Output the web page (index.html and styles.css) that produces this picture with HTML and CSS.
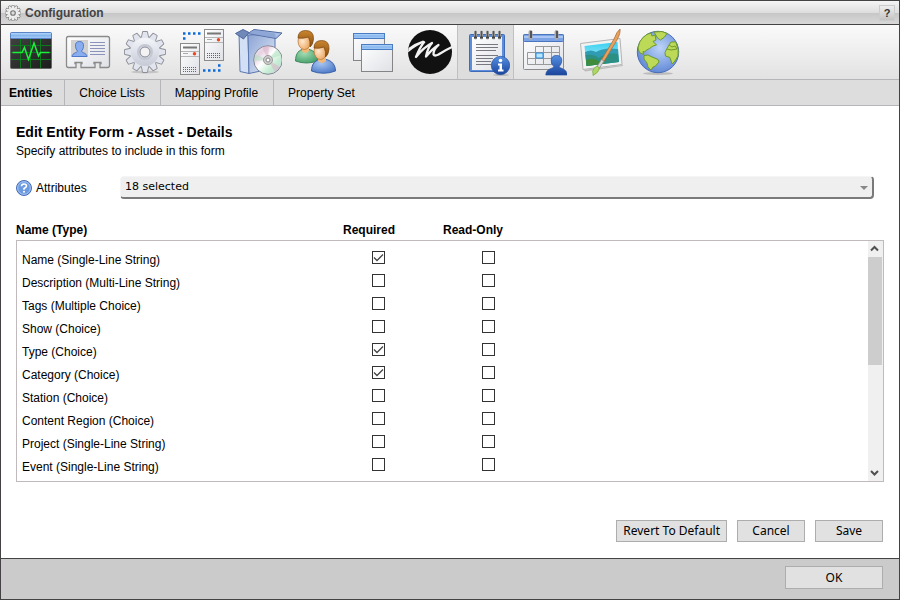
FILE: index.html
```html
<!DOCTYPE html>
<html lang="en">
<head>
    <meta charset="UTF-8">
    <meta name="viewport" content="width=device-width, initial-scale=1.0">
    <title>Configuration</title>
    <link rel="stylesheet" href="styles.css">
</head>
<body>

    <!-- shared gradients and shapes -->
    <svg class="defs" aria-hidden="true">
        <defs>
            <linearGradient id="blue-bar" x1="0" y1="0" x2="0" y2="1">
                <stop offset="0" stop-color="#b9dcfb"/>
                <stop offset=".5" stop-color="#86b5ee"/>
                <stop offset="1" stop-color="#a9cdf6"/>
            </linearGradient>
            <linearGradient id="paper" x1="0" y1="0" x2="1" y2="1">
                <stop offset="0" stop-color="#ffffff"/>
                <stop offset="1" stop-color="#dfe1e6"/>
            </linearGradient>
            <linearGradient id="metal" x1="0" y1="0" x2="0" y2="1">
                <stop offset="0" stop-color="#f4f6fa"/>
                <stop offset="1" stop-color="#c6cad6"/>
            </linearGradient>
            <linearGradient id="screen" x1="0" y1="0" x2="1" y2="1">
                <stop offset="0" stop-color="#444444"/>
                <stop offset="1" stop-color="#1c1c1c"/>
            </linearGradient>
            <linearGradient id="carton" x1="0" y1="0" x2="1" y2="1">
                <stop offset="0" stop-color="#8ba3d3"/>
                <stop offset="1" stop-color="#e4ecfa"/>
            </linearGradient>
            <linearGradient id="disc" x1="0" y1="0" x2="1" y2="1">
                <stop offset="0" stop-color="#f2f2f4"/>
                <stop offset=".25" stop-color="#e6d2e2"/>
                <stop offset=".45" stop-color="#ffffff"/>
                <stop offset=".7" stop-color="#c4ecd2"/>
                <stop offset="1" stop-color="#c9d0e8"/>
            </linearGradient>
            <radialGradient id="skin" cx=".35" cy=".5" r=".7">
                <stop offset="0" stop-color="#ffe9cf"/>
                <stop offset="1" stop-color="#e89a4c"/>
            </radialGradient>
            <linearGradient id="hair" x1="0" y1="0" x2="0" y2="1">
                <stop offset="0" stop-color="#c98530"/>
                <stop offset="1" stop-color="#8a4d0c"/>
            </linearGradient>
            <radialGradient id="green-body" cx=".4" cy=".3" r=".8">
                <stop offset="0" stop-color="#a4dcb4"/>
                <stop offset="1" stop-color="#3d9b66"/>
            </radialGradient>
            <radialGradient id="blue-body" cx=".4" cy=".3" r=".8">
                <stop offset="0" stop-color="#a8c6f2"/>
                <stop offset="1" stop-color="#4573c4"/>
            </radialGradient>
            <linearGradient id="badge" x1="0" y1="0" x2="0" y2="1">
                <stop offset="0" stop-color="#5590e2"/>
                <stop offset="1" stop-color="#1b459c"/>
            </linearGradient>
            <radialGradient id="ocean" cx=".55" cy=".4" r=".65">
                <stop offset="0" stop-color="#bcd4f8"/>
                <stop offset="1" stop-color="#5b84d4"/>
            </radialGradient>
            <linearGradient id="sky" x1="0" y1="0" x2="0" y2="1">
                <stop offset="0" stop-color="#36d0f2"/>
                <stop offset="1" stop-color="#c6f2f6"/>
            </linearGradient>
            <path id="tooth" d="M21.500 11 23 4h4l1.500 7z"/>
            <g id="teeth">
                <use href="#tooth"/>
                <use href="#tooth" transform="rotate(30 25 24)"/>
                <use href="#tooth" transform="rotate(60 25 24)"/>
                <use href="#tooth" transform="rotate(90 25 24)"/>
                <use href="#tooth" transform="rotate(120 25 24)"/>
                <use href="#tooth" transform="rotate(150 25 24)"/>
                <use href="#tooth" transform="rotate(180 25 24)"/>
                <use href="#tooth" transform="rotate(210 25 24)"/>
                <use href="#tooth" transform="rotate(240 25 24)"/>
                <use href="#tooth" transform="rotate(270 25 24)"/>
                <use href="#tooth" transform="rotate(300 25 24)"/>
                <use href="#tooth" transform="rotate(330 25 24)"/>
            </g>
            <g id="server">
                <rect x=".5" y=".5" width="19" height="31" fill="url(#paper)" stroke="#8b8b8b"/>
                <path d="M1 8.500h18M1 13.500h18" stroke="#b5b5b5"/>
                <path d="M3 4.500h14" stroke="#777" stroke-width="2"/>
                <path d="M3 10.500h5" stroke="#aaa"/>
                <circle cx="14.500" cy="10.800" r="1.700" fill="#f0441c"/>
                <path d="M3 24.500h14M3 26.500h14M3 28.500h14" stroke="#666" stroke-dasharray="1 1"/>
            </g>
            <g id="win">
                <rect x=".5" y=".5" width="31" height="27" fill="url(#paper)" stroke="#858585"/>
                <rect x=".5" y=".5" width="31" height="5" fill="url(#blue-bar)" stroke="#4a7cc4"/>
            </g>
        </defs>
    </svg>

    <div class="window">
        <header class="title-bar">
            <svg class="title-icon" viewBox="4 3 42 42" aria-hidden="true">
                <use href="#teeth" fill="#e8e8e8" stroke="#777" stroke-width="3"/>
                <circle cx="25" cy="24" r="15" fill="#eee" stroke="#888" stroke-width="2"/>
                <use href="#teeth" fill="#eee"/>
                <circle cx="25" cy="24" r="6" fill="#ddd" stroke="#777" stroke-width="3"/>
            </svg>
            <h1>Configuration</h1>
            <button type="button" class="help-button">?</button>
        </header>

        <nav class="toolbar">
            <button type="button" class="tool" aria-label="Monitor">
                <svg viewBox="0 0 48 48">
                    <rect x="4.500" y="5" width="41" height="35.500" rx="1" fill="url(#screen)" stroke="#666"/>
                    <path d="M14.500 11v29M24.500 11v29M34.500 11v29M5 17.500h40M5 24.500h40M5 31.500h40" stroke="#0b7a1c"/>
                    <rect x="4.500" y="4.500" width="41" height="6" rx="1" fill="url(#blue-bar)" stroke="#5a83c8"/>
                    <path d="M6.500 24.500H16l2.500-5 4 12L28 15l4.500 13 2-3.500h9" fill="none" stroke="#1cf03c" stroke-width="1.500"/>
                </svg>
            </button>
            <button type="button" class="tool" aria-label="Contacts">
                <svg viewBox="0 0 48 48">
                    <path d="M5.500 8.500h39q2 0 2 2v27q0 2-2 2H37v-4h1v-1h-7v1h1v4H18v-4h1v-1h-7v1h1v4H5.500q-2 0-2-2v-27q0-2 2-2z" fill="url(#paper)" stroke="#8a8a8a" stroke-width="1.300"/>
                    <rect x="8" y="12" width="17" height="17" fill="#d0d0d0"/>
                    <path d="M16.500 13.500c-3 0-4.300 2-4 4.800.2 2.300 1 3.500 2 4.700-.2 2-5 1.500-5.500 5.500h15c-.5-4-5.300-3.500-5.500-5.500 1-1.200 1.800-2.400 2-4.700.3-2.800-1-4.800-4-4.800z" fill="#88aef0" stroke="#5078c8"/>
                    <path d="M27 14.500h15M27 17.500h15M27 20.500h15M27 23.500h15M27 26.500h15" stroke="#8b93ba"/>
                </svg>
            </button>
            <button type="button" class="tool" aria-label="Settings">
                <svg viewBox="0 0 48 48">
                    <ellipse cx="25" cy="44" rx="14" ry="1.500" fill="#c4c4c4"/>
                    <use href="#teeth" fill="#e6e9f1" stroke="#8c8f98" stroke-width="1.800" stroke-linejoin="round"/>
                    <circle cx="25" cy="24" r="15.500" fill="url(#metal)" stroke="#8c8f98"/>
                    <use href="#teeth" fill="#e2e5ee"/>
                    <circle cx="25" cy="24" r="14" fill="url(#metal)"/>
                    <circle cx="25" cy="24" r="7" fill="#d7dae3" stroke="#c4c8d4" stroke-width="2"/>
                    <circle cx="25" cy="24" r="5" fill="#f3f3f3" stroke="#888a92"/>
                </svg>
            </button>
            <button type="button" class="tool" aria-label="Servers">
                <svg viewBox="0 0 48 48">
                    <use href="#server" x="27" y="1"/>
                    <use href="#server" x="3" y="15"/>
                    <path d="M6 5.500h18M6 10.500h3M26 42.500h18M41 37.500h3" stroke="#0a6ad8" stroke-width="2.500" stroke-dasharray="2.500 2.500"/>
                </svg>
            </button>
            <button type="button" class="tool" aria-label="Software">
                <svg viewBox="0 0 48 48">
                    <path d="M5 5.500 14 7l1 38.500-9-2z" fill="#d3dff5" stroke="#5b77b0"/>
                    <path d="m14 7 27-1v34l-26 5.500z" fill="url(#carton)" stroke="#5b77b0"/>
                    <path d="m1.500 5.500 7.500-4 6 3L9.500 11z" fill="#7189b8" stroke="#4d689f"/>
                    <path d="m14 5.500 6-4 28 3.500-6 5.500z" fill="#a9bee6" stroke="#4d689f"/>
                    <path d="m14 5.500 28 5-1-5-21-4z" fill="#7d98cd" opacity=".6"/>
                    <circle cx="34" cy="32" r="14.300" fill="url(#disc)" stroke="#858894"/>
                    <path d="M34 32 28 19l7-1.500zM34 32l12 7-5 5z" fill="#dcaec4" opacity=".5"/>
                    <path d="m34 32-13-6-1 7zM34 32l13-5-4-6z" fill="#aae0bc" opacity=".5"/>
                    <circle cx="34" cy="32" r="4.500" fill="#ccc" stroke="#999"/>
                    <circle cx="34" cy="32" r="2" fill="#fff" stroke="#888"/>
                </svg>
            </button>
            <button type="button" class="tool" aria-label="Users">
                <svg viewBox="0 0 48 48">
                    <path d="M4.500 33c0-7 3-12 10-12s12 4 12 12q-11 4-22 0z" fill="url(#green-body)" stroke="#43895f"/>
                    <path d="M11 18v5q3 4 7 0v-6z" fill="#f0b878"/>
                    <ellipse cx="13.500" cy="13" rx="6.500" ry="8.500" fill="url(#skin)" stroke="#b87333" stroke-width=".7"/>
                    <path d="M7 10q0-7.500 7.500-7.500Q23 2.500 22.500 11q-.5 6-3.500 8 .5-6-1.500-10Q12 11 7 10z" fill="url(#hair)" stroke="#7a450e" stroke-width=".7"/>
                    <path d="M20.500 43c0-7 4-12 11-12s13 4 13 12q-12 4.500-24 0z" fill="url(#blue-body)" stroke="#3b62a8"/>
                    <path d="M27 28v5q4 4 8 0v-6z" fill="#f0b878"/>
                    <ellipse cx="29.500" cy="23" rx="6.500" ry="8.500" fill="url(#skin)" stroke="#b87333" stroke-width=".7"/>
                    <path d="M23 20q0-7.500 7.500-7.500Q38.500 12.500 38 21q-.5 6-3.500 8 .5-6-1.500-10-5 2-10 1z" fill="url(#hair)" stroke="#7a450e" stroke-width=".7"/>
                </svg>
            </button>
            <button type="button" class="tool" aria-label="Windows">
                <svg viewBox="0 0 48 48">
                    <use href="#win" x="5" y="5"/>
                    <use href="#win" x="13" y="16"/>
                </svg>
            </button>
            <button type="button" class="tool" aria-label="Media">
                <svg viewBox="0 0 48 48">
                    <circle cx="25" cy="24" r="22" fill="#111"/>
                    <path d="M3.500 20Q10 15 18 12.500L20.500 14Q11 17.500 3 24.500z" fill="#f2f2f2"/>
                    <path d="M19.500 13.500Q15 19 11 29 19 19 27 15 22.500 20 21 28.500 27 21 33.500 17 28 22 28.500 26.500q1 2 5 0 7-4.500 13.500-7.500" fill="none" stroke="#f2f2f2" stroke-width="2.300" stroke-linejoin="round"/>
                </svg>
            </button>
            <button type="button" class="tool active" aria-label="Entities" aria-current="page">
                <svg viewBox="0 0 48 48">
                    <rect x="7.500" y="6.500" width="35" height="37" rx="1" fill="#5d8edc" stroke="#3e6ab8"/>
                    <path d="M10 9h30v32l-1 1H10z" fill="url(#paper)"/>
                    <path d="M14 16.500h22M14 19.500h22M14 22.500h20M14 27.500h22M14 30.500h17M14 33.500h15M14 36.500h15" stroke="#77777f"/>
                    <path d="M13.500 4v6M19.500 4v6M25.500 4v6M31.500 4v6M37.500 4v6" stroke="#aaa" stroke-width="3" stroke-linecap="round"/>
                    <path d="M13.500 3v6M19.500 3v6M25.500 3v6M31.500 3v6M37.500 3v6" stroke="#555" stroke-width="1.500"/>
                    <path d="M12 9.500h3M18 9.500h3M24 9.500h3M30 9.500h3M36 9.500h3" stroke="#444" stroke-width="2"/>
                    <ellipse cx="39" cy="47" rx="8" ry="1" fill="#bbb"/>
                    <circle cx="38.500" cy="37.500" r="9.200" fill="url(#badge)" stroke="#2450a0" stroke-width=".7"/>
                    <circle cx="38.500" cy="32.500" r="1.800" fill="#fff"/>
                    <path d="M36 35.500h4v6h1.500v2H36v-2h1.500v-4H36z" fill="#fff"/>
                </svg>
            </button>
            <button type="button" class="tool" aria-label="Schedule">
                <svg viewBox="0 0 48 48">
                    <rect x="4.500" y="6.500" width="40" height="35" rx="1" fill="url(#paper)" stroke="#8b8b8b"/>
                    <rect x="4.500" y="6.500" width="40" height="7" rx="1" fill="#7ba3e6" stroke="#4874c0"/>
                    <path d="M5 9h39" stroke="#a9c6f4" stroke-width="2"/>
                    <path d="M11.500 4v6M37.500 4v6" stroke="#aaa" stroke-width="4" stroke-linecap="round"/>
                    <path d="M12 3v7M38 3v7" stroke="#555" stroke-width="2"/>
                    <path d="M16.500 18.500h24v18h-32v-12h32M8.500 30.500h32M16.500 18.500v18M24.500 18.500v18M32.500 18.500v18" fill="none" stroke="#999"/>
                    <rect x="17" y="25" width="7" height="5" fill="#b9e6ff" stroke="#2e8ad8"/>
                    <path d="M37.500 27.500c-4 0-5.500 2.500-5.200 5.500.2 2.500 1.200 4 2.500 5.500-.3 2.500-7.800 1.500-8 8.500h21.400c-.2-7-7.700-6-8-8.500 1.300-1.500 2.300-3 2.500-5.500.3-3-1.200-5.500-5.200-5.500z" fill="url(#badge)" stroke="#28509c" stroke-width=".7"/>
                </svg>
            </button>
            <button type="button" class="tool" aria-label="Appearance">
                <svg viewBox="0 0 48 48">
                    <path d="m8 42 39-5v1L9 43.500z" fill="#bbb"/>
                    <path d="M4.500 15.500 44 10.500 46 36.500 7 41.500z" fill="#f2f2f2" stroke="#b4b4b4"/>
                    <path d="M8.500 18 41.500 14 43 34 10.500 38z" fill="url(#sky)"/>
                    <path d="M9 24q6-3 11 0 8-5 22-3l1 13-32.500 4z" fill="#2f9cb4"/>
                    <path d="M9.500 27q9-1 13 3 9-6 19.500-4l1 8-32.500 4z" fill="#2b8f84"/>
                    <path d="M10 32q8-3 12 1l8 2.500-19.500 2.500z" fill="#3f8d3c"/>
                    <path d="M44 1q.8 4-3 11L27 35l-2.500-1.500L38 11Q41 3 44 1z" fill="#e8a05c" stroke="#a8683a" stroke-width=".7"/>
                    <path d="m25.500 31.500 2.500 1.500-4.500 7-2.500-1.500z" fill="#d3d6da" stroke="#888" stroke-width=".7"/>
                    <path d="m21 38 2.500 2q-.5 4.500-6.500 7.500.2-3-.5-4 1-4 4.500-5.500z" fill="#aed865" stroke="#7aa63c" stroke-width=".7"/>
                </svg>
            </button>
            <button type="button" class="tool" aria-label="Web">
                <svg viewBox="0 0 48 48">
                    <ellipse cx="25" cy="45.500" rx="15" ry="1.500" fill="#bbb"/>
                    <circle cx="25" cy="24" r="20.700" fill="url(#ocean)" stroke="#4a6db8"/>
                    <g fill="#bcd957" stroke="#6f9a2c" stroke-linejoin="round">
                        <path d="M5 20Q6 13 10 9.500 14 5.500 18 5l1 3 3-1 1 5-3 1.500 3.500 3.500-3.500 1-3.500 2.500-3 1.500-2 2-1.500-.5.500 3-4-2z"/>
                        <path d="m21 4 8-.5 5 2-2.500 3.500-4 3-3-2z"/>
                        <path d="m11 27.500 4-.5 3 1.500 7 3 1 2.500-3.500 4-2.500 1-2 3-3-3-1-4-3-4z"/>
                        <path d="m36 17 2-3h3l1.500-.5q4 8 2.500 14.500L42 33l-3 3-2-6.500-4.500-1.500-.5-3.500 2-4z"/>
                        <path d="m36 17 3 2 3-1 2 3-6 1-4-1" fill="none"/>
                    </g>
                </svg>
            </button>
        </nav>

        <nav class="tabs">
            <a href="#" class="current" aria-current="page">Entities</a>
            <a href="#">Choice Lists</a>
            <a href="#">Mapping Profile</a>
            <a href="#">Property Set</a>
        </nav>

        <main class="content">
            <h2>Edit Entity Form - Asset - Details</h2>
            <p class="hint">Specify attributes to include in this form</p>

            <div class="field">
                <svg class="help-icon" viewBox="0 0 16 16" aria-hidden="true">
                    <circle cx="8" cy="8" r="7.500" fill="#6c9ae0" stroke="#466eb4"/>
                    <circle cx="8" cy="8" r="6.300" fill="none" stroke="#a9c6f2"/>
                    <path d="M5.500 6.300Q5.500 4 8 4t2.500 2Q10.500 7.300 8 8.500v1.300" fill="none" stroke="#fff" stroke-width="1.600"/>
                    <circle cx="8" cy="11.800" r="1" fill="#fff"/>
                </svg>
                <label for="attributes">Attributes</label>
                <div class="select-wrap">
                    <select id="attributes">
                        <option>18 selected</option>
                    </select>
                </div>
            </div>

            <div class="grid-head">
                <span>Name (Type)</span>
                <span id="required">Required</span>
                <span id="read-only">Read-Only</span>
            </div>
            <div class="grid-box">
                <table>
                    <tbody>
                        <tr>
                            <th scope="row" id="a1">Name (Single-Line String)</th>
                            <td><input type="checkbox" aria-labelledby="a1 required" checked></td>
                            <td><input type="checkbox" aria-labelledby="a1 read-only"></td>
                        </tr>
                        <tr>
                            <th scope="row" id="a2">Description (Multi-Line String)</th>
                            <td><input type="checkbox" aria-labelledby="a2 required"></td>
                            <td><input type="checkbox" aria-labelledby="a2 read-only"></td>
                        </tr>
                        <tr>
                            <th scope="row" id="a3">Tags (Multiple Choice)</th>
                            <td><input type="checkbox" aria-labelledby="a3 required"></td>
                            <td><input type="checkbox" aria-labelledby="a3 read-only"></td>
                        </tr>
                        <tr>
                            <th scope="row" id="a4">Show (Choice)</th>
                            <td><input type="checkbox" aria-labelledby="a4 required"></td>
                            <td><input type="checkbox" aria-labelledby="a4 read-only"></td>
                        </tr>
                        <tr>
                            <th scope="row" id="a5">Type (Choice)</th>
                            <td><input type="checkbox" aria-labelledby="a5 required" checked></td>
                            <td><input type="checkbox" aria-labelledby="a5 read-only"></td>
                        </tr>
                        <tr>
                            <th scope="row" id="a6">Category (Choice)</th>
                            <td><input type="checkbox" aria-labelledby="a6 required" checked></td>
                            <td><input type="checkbox" aria-labelledby="a6 read-only"></td>
                        </tr>
                        <tr>
                            <th scope="row" id="a7">Station (Choice)</th>
                            <td><input type="checkbox" aria-labelledby="a7 required"></td>
                            <td><input type="checkbox" aria-labelledby="a7 read-only"></td>
                        </tr>
                        <tr>
                            <th scope="row" id="a8">Content Region (Choice)</th>
                            <td><input type="checkbox" aria-labelledby="a8 required"></td>
                            <td><input type="checkbox" aria-labelledby="a8 read-only"></td>
                        </tr>
                        <tr>
                            <th scope="row" id="a9">Project (Single-Line String)</th>
                            <td><input type="checkbox" aria-labelledby="a9 required"></td>
                            <td><input type="checkbox" aria-labelledby="a9 read-only"></td>
                        </tr>
                        <tr>
                            <th scope="row" id="a10">Event (Single-Line String)</th>
                            <td><input type="checkbox" aria-labelledby="a10 required"></td>
                            <td><input type="checkbox" aria-labelledby="a10 read-only"></td>
                        </tr>
                    </tbody>
                </table>
                <div class="scrollbar" aria-hidden="true">
                    <svg viewBox="0 0 14 16"><path d="m3 9.500 3.500-3.500 3.500 3.500" fill="none" stroke="#505050" stroke-width="2"/></svg>
                    <div class="track"><div class="thumb"></div></div>
                    <svg viewBox="0 0 14 16"><path d="m3 6 3.500 3.500L10 6" fill="none" stroke="#505050" stroke-width="2"/></svg>
                </div>
            </div>

            <div class="actions">
                <button type="button" class="btn">Revert To Default</button>
                <button type="button" class="btn">Cancel</button>
                <button type="button" class="btn">Save</button>
            </div>
        </main>

        <footer class="footer">
            <button type="button" class="btn wide">OK</button>
        </footer>
    </div>

</body>
</html>
```

FILE: styles.css
```css
:root {
    --frame: #444244;
    --line: #b5b5ba;
    --panel: #dddddd;
    --button: #e1e1e1;
    --button-line: #adadad;
}

* {
    box-sizing: border-box;
}

body {
    margin: 0;
    font-family: "Liberation Sans", Arial, sans-serif;
    font-size: 12px;
    color: #000;
    background: #fff;
}

button {
    font: inherit;
    color: inherit;
    padding: 0;
}

.defs {
    position: absolute;
    width: 0;
    height: 0;
}

.window {
    display: flex;
    flex-direction: column;
    min-height: 100vh;
    border: 1px solid var(--frame);
}

/* title bar */
.title-bar {
    display: flex;
    align-items: center;
    height: 24px;
    padding: 0 4px;
    border-bottom: 1px solid var(--frame);
    background: linear-gradient(#f6f5f6, #dedede 50%, #c6c6c6 51%, #d8d8d8);
}

.title-icon {
    width: 16px;
    height: 16px;
}

h1 {
    flex: 1;
    margin: 0 0 0 4px;
    font-size: 12px;
    color: #444;
}

.help-button {
    width: 16px;
    height: 16px;
    border: 1px solid #ccc;
    background: linear-gradient(#eee, #c4c4c4);
    font-size: 11px;
    font-weight: bold;
    line-height: 14px;
    color: #333;
}

/* icon toolbar */
.toolbar {
    display: flex;
    height: 55px;
    border-bottom: 1px solid var(--line);
    background: linear-gradient(#fafafa, #e2e2e2);
}

.tool {
    width: 57px;
    padding: 0 3px 0 4px;
    border: 0 solid transparent;
    border-width: 0 1px;
    background: none;
}

.tool.active {
    border-color: #c0c0c0;
    background: var(--panel);
}

.tool svg {
    display: block;
    width: 48px;
    height: 48px;
}

/* tabs */
.tabs {
    display: flex;
    height: 26px;
    border-bottom: 1px solid var(--line);
    background: var(--panel);
    line-height: 26px;
}

.tabs a {
    height: 25px;
    padding: 0 15px 0 14px;
    border-right: 1px solid var(--line);
    color: inherit;
    text-decoration: none;
}

.tabs a:first-child {
    padding: 0 12px 0 8px;
}

.tabs a:last-child {
    border-right: 0;
}

.tabs .current {
    font-weight: bold;
}

/* form */
.content {
    flex: 1;
    padding: 16px 15px;
}

h2 {
    margin: 0;
    font-size: 14px;
    line-height: 20px;
}

.hint {
    margin: 0;
    line-height: 18px;
}

.field {
    display: flex;
    align-items: center;
    margin: 16px 10px 0 0;
}

.help-icon {
    width: 16px;
    height: 16px;
    margin-right: 4px;
}

.field label {
    width: 84px;
    line-height: 22px;
}

.select-wrap {
    flex: 1;
    display: grid;
    align-items: center;
}

.select-wrap::after {
    content: "";
    grid-area: 1 / 1;
    justify-self: end;
    margin-right: 6px;
    border: 4px solid transparent;
    border-top-color: #888;
    border-bottom: 0;
    pointer-events: none;
}

select {
    grid-area: 1 / 1;
    appearance: none;
    width: 100%;
    height: 23px;
    padding: 0 4px 2px;
    border: 1px solid #f5f5f5;
    border-right: 2px solid #7a7a7a;
    border-bottom: 2px solid #7a7a7a;
    border-radius: 4px;
    background: #efefef;
    font-family: "DejaVu Sans", Verdana, sans-serif;
    font-size: 11px;
    color: #000;
}

.grid-head {
    display: grid;
    grid-template-columns: 327px 100px 1fr;
    margin-top: 21px;
    font-weight: bold;
    line-height: 20px;
}

.grid-box {
    display: flex;
    align-items: stretch;
    border: 1px solid #c0babc;
}

table {
    flex: 1;
    display: block;
    border-collapse: collapse;
    padding: 7px 0 3px 5px;
}

tr {
    height: 23px;
}

th {
    width: 350px;
    padding: 0;
    font-weight: normal;
    text-align: left;
}

td {
    width: 110px;
    padding: 3px 0 0;
    vertical-align: top;
}

input[type="checkbox"] {
    appearance: none;
    display: block;
    width: 13px;
    height: 13px;
    margin: 0;
    border: 1px solid #333;
    background: #fff;
}

input[type="checkbox"]:checked {
    background: url("data:image/svg+xml,%3Csvg xmlns='http://www.w3.org/2000/svg' viewBox='0 0 11 11'%3E%3Cpath d='M1 5.500 4 8.500 10 2.500' fill='none' stroke='%23444' stroke-width='1.300'/%3E%3C/svg%3E");
}

.scrollbar {
    display: flex;
    flex-direction: column;
    width: 15px;
    background: #f0f0f0;
}

.scrollbar svg {
    width: 14px;
    height: 16px;
}

.track {
    flex: 1;
}

.thumb {
    width: 14px;
    height: 52%;
    background: #cdcdcd;
}

/* buttons */
.actions {
    display: flex;
    justify-content: flex-end;
    gap: 10px;
    margin: 38px 1px 0 0;
}

.btn {
    min-width: 68px;
    height: 22px;
    padding: 0 6px;
    border: 1px solid var(--button-line);
    background: var(--button);
    font-family: "Noto Sans", Tahoma, sans-serif;
    font-size: 12px;
    line-height: 20px;
}

.btn.wide {
    width: 98px;
    height: 23px;
}

.footer {
    display: flex;
    justify-content: flex-end;
    height: 41px;
    padding: 7px 16px 0;
    border-top: 1px solid var(--frame);
    background: #cbcbcb;
}
```
